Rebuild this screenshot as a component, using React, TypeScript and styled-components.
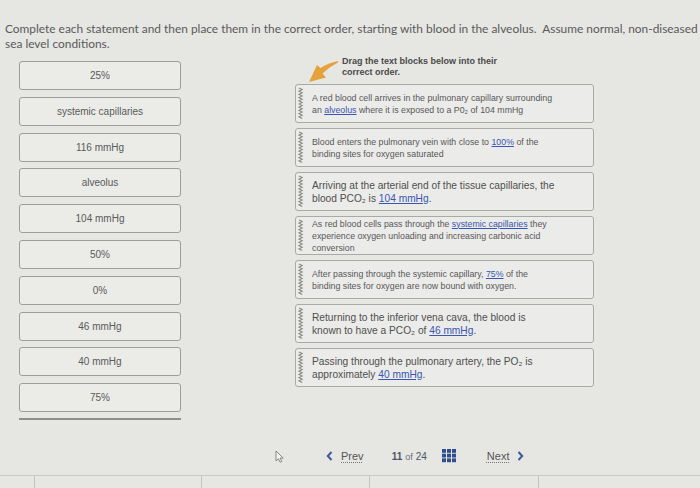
import React from 'react';
import styled, { createGlobalStyle } from 'styled-components';

const GlobalStyle = createGlobalStyle`
    html, body {
        margin: 0;
        padding: 0;
        background: #e6e6e3;
    }
    body {
        font-family: "Liberation Sans", Arial, sans-serif;
        color: #555;
    }
`;

const Page = styled.div`
    width: 700px;
    height: 488px;
    box-sizing: border-box;
    padding-top: 22px;
    display: flex;
    flex-direction: column;
    overflow: hidden;
`;

const Prompt = styled.p`
    margin: 0 0 0 5px;
    font-family: Lato, "Open Sans", sans-serif;
    font-size: 11.9px;
    line-height: 14.5px;
    color: #5a5a5a;
    white-space: nowrap;
`;

const Columns = styled.div`
    display: flex;
    align-items: flex-start;
    margin-top: 5px;
`;

const Bank = styled.div`
    width: 162px;
    margin-left: 19px;
    margin-top: 5px;
    padding-bottom: 6px;
    border-bottom: 2px solid #8e8e8c;
    display: flex;
    flex-direction: column;
    gap: 6.8px;
`;

const Chip = styled.div`
    height: 29px;
    box-sizing: border-box;
    border: 1px solid #9e9e9c;
    border-radius: 3px;
    background: #ebebe8;
    display: flex;
    align-items: center;
    justify-content: center;
    font-size: 10px;
    color: #5a5a5a;
`;

const Sorter = styled.div`
    width: 299px;
    margin-left: 114px;
    display: flex;
    flex-direction: column;
`;

const Hint = styled.div`
    height: 28px;
    display: flex;
    align-items: flex-start;
    padding-left: 12px;
`;

const HintText = styled.div`
    margin-left: 3px;
    font-size: 9px;
    line-height: 11px;
    font-weight: bold;
    color: #4a4a4a;
`;

const Blocks = styled.div`
    display: flex;
    flex-direction: column;
    gap: 5px;
`;

const Block = styled.div`
    height: 39px;
    box-sizing: border-box;
    border: 1px solid #a9a9a7;
    border-radius: 3px;
    background: #ebebe9;
    display: flex;
    align-items: stretch;
    padding: 2px 4px 2px 2px;
`;

type BlockTextProps = {
    big?: boolean
}

const BlockText = styled.div<BlockTextProps>`
    margin-left: 8px;
    align-self: center;
    font-size: ${p => p.big ? '10.2px' : '8.8px'};
    line-height: ${p => p.big ? '13px' : '12px'};
    color: ${p => p.big ? '#4f4f4f' : '#585858'};
    white-space: nowrap;
`;

const Filled = styled.span`
    color: #3a56b0;
    text-decoration: underline;
`;

const Nav = styled.div`
    margin-top: auto;
    height: 18px;
    display: flex;
    align-items: center;
    padding-left: 275px;
    margin-bottom: 10px;
`;

const NavLink = styled.div`
    display: flex;
    align-items: center;
    gap: 8px;
    font-size: 11px;
    color: #555;
`;

const NavWord = styled.span`
    text-decoration: underline dotted #777;
    text-underline-offset: 2px;
`;

const Counter = styled.div`
    margin-left: 28px;
    font-size: 10px;
    color: #4c5468;
    display: flex;
    align-items: baseline;
    gap: 3px;
`;

const CounterSmall = styled.span`
    font-size: 9px;
    color: #6a6f7a;
`;

const Footer = styled.div`
    height: 12px;
    border-top: 1px solid #c9c9c6;
    display: flex;
`;

type CellProps = {
    w: number
}

const Cell = styled.div<CellProps>`
    width: ${p => p.w}px;
    flex: none;
    border-right: 1px solid #c4c4c1;
`;

const Grip = () => {
    const pts: string[] = [];
    for (let y = 0; y <= 31; y += 1.6) {
        pts.push(`${(Math.round(y / 1.6) % 2) ? 4.2 : 1} ${y + 1}`);
    }
    return (
        <svg width="6" height="33" viewBox="0 0 6 33" style={{ flex: 'none', alignSelf: 'center' }}>
            <polyline points={pts.join(' ')} fill="none" stroke="#8a8a88" strokeWidth="1.1" />
        </svg>
    );
};

const Chevron = ({ left }: { left?: boolean }) => (
    <svg width="7" height="10" viewBox="0 0 7 10">
        <path d={left ? 'M5.5 1 L1.8 5 L5.5 9' : 'M1.5 1 L5.2 5 L1.5 9'} fill="none" stroke="#3a5a9b" strokeWidth="2" />
    </svg>
);

const chips = ['25%', 'systemic capillaries', '116 mmHg', 'alveolus', '104 mmHg', '50%', '0%', '46 mmHg', '40 mmHg', '75%'];

function App() {
    return (
        <Page>
            <GlobalStyle />
            <Prompt>
                Complete each statement and then place them in the correct order, starting with blood in the alveolus.&nbsp; Assume normal, non-diseased<br />
                sea level conditions.
            </Prompt>
            <Columns>
                <Bank>
                    {chips.map(c => <Chip key={c}>{c}</Chip>)}
                </Bank>
                <Sorter>
                    <Hint>
                        <svg width="32" height="24" viewBox="0 0 32 24" style={{ marginTop: 4 }}>
                            <path d="M31 1 Q21 3 13.5 8 L10 5 L2 22 L19 17.5 L15.5 13.5 Q22 7 31 2.6 Z" fill="#e6a23a" />
                        </svg>
                        <HintText>Drag the text blocks below into their<br />correct order.</HintText>
                    </Hint>
                    <Blocks>
                        <Block>
                            <Grip />
                            <BlockText>A red blood cell arrives in the pulmonary capillary surrounding<br />an <Filled>alveolus</Filled> where it is exposed to a P0₂ of 104 mmHg</BlockText>
                        </Block>
                        <Block>
                            <Grip />
                            <BlockText>Blood enters the pulmonary vein with close to <Filled>100%</Filled> of the<br />binding sites for oxygen saturated</BlockText>
                        </Block>
                        <Block>
                            <Grip />
                            <BlockText big>Arriving at the arterial end of the tissue capillaries, the<br />blood PCO₂ is <Filled>104 mmHg</Filled>.</BlockText>
                        </Block>
                        <Block>
                            <Grip />
                            <BlockText>As red blood cells pass through the <Filled>systemic capillaries</Filled> they<br />experience oxygen unloading and increasing carbonic acid<br />conversion</BlockText>
                        </Block>
                        <Block>
                            <Grip />
                            <BlockText>After passing through the systemic capillary, <Filled>75%</Filled> of the<br />binding sites for oxygen are now bound with oxygen.</BlockText>
                        </Block>
                        <Block>
                            <Grip />
                            <BlockText big>Returning to the inferior vena cava, the blood is<br />known to have a PCO₂ of <Filled>46 mmHg</Filled>.</BlockText>
                        </Block>
                        <Block>
                            <Grip />
                            <BlockText big>Passing through the pulmonary artery, the PO₂ is<br />approximately <Filled>40 mmHg</Filled>.</BlockText>
                        </Block>
                    </Blocks>
                </Sorter>
            </Columns>
            <Nav>
                <svg width="9" height="13" viewBox="0 0 9 13">
                    <path d="M1 1 L1 11 L3.4 8.8 L5.2 12.3 L6.8 11.5 L5 8.1 L8.2 8.1 Z" fill="#f4f4f2" stroke="#7a7a7a" strokeWidth="0.9" />
                </svg>
                <NavLink style={{ marginLeft: 42 }}>
                    <Chevron left />
                    <NavWord>Prev</NavWord>
                </NavLink>
                <Counter>
                    <b>11</b>
                    <CounterSmall>of</CounterSmall>
                    <span>24</span>
                </Counter>
                <svg width="15" height="14" viewBox="0 0 15 14" style={{ marginLeft: 15 }}>
                    {[0, 1, 2].map(r => [0, 1, 2].map(c => (
                        <rect key={`${r}${c}`} x={c * 5} y={r * 4.7} width="4" height="3.8" fill="#2f4e8e" />
                    )))}
                </svg>
                <NavLink style={{ marginLeft: 30 }}>
                    <NavWord>Next</NavWord>
                    <Chevron />
                </NavLink>
            </Nav>
            <Footer>
                <Cell w={34} />
                <Cell w={166} />
                <Cell w={167} />
                <Cell w={168} />
            </Footer>
        </Page>
    );
}

export default App;
